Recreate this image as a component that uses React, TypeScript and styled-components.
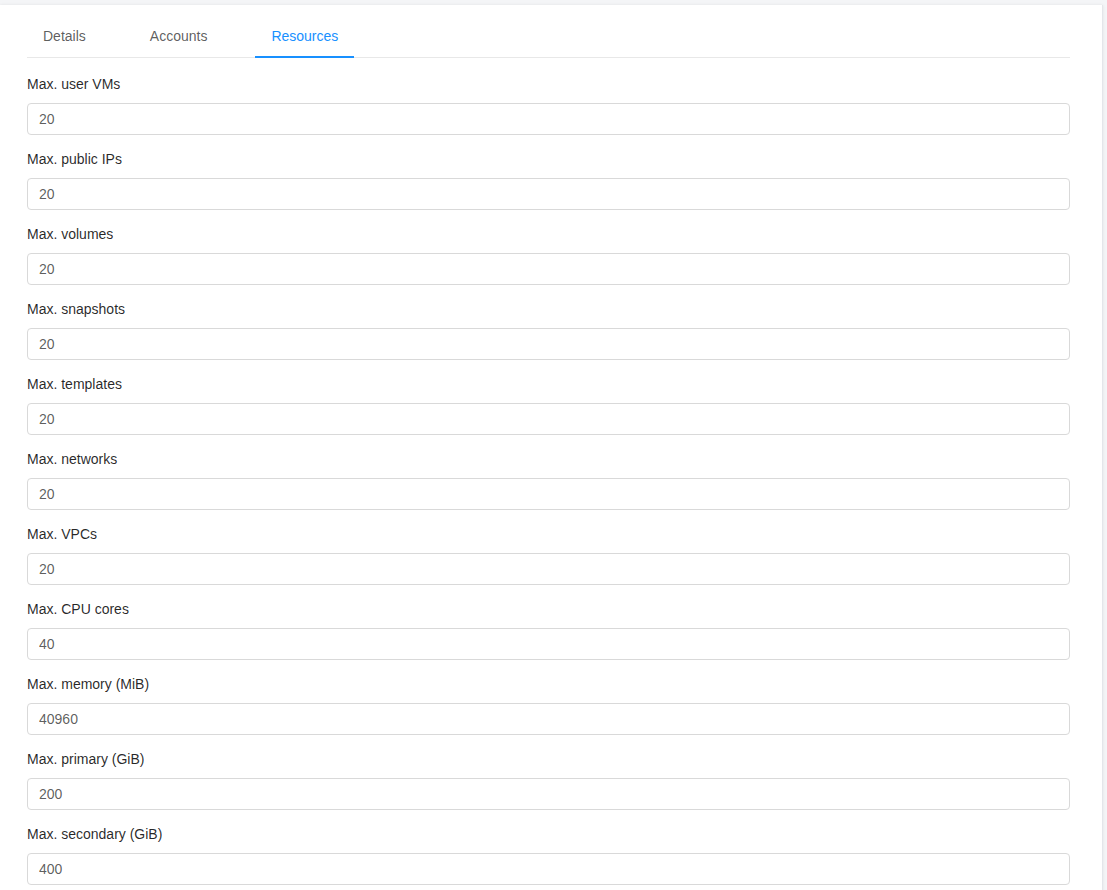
import * as React from "react";
import styled, { createGlobalStyle } from "styled-components";

const GlobalStyle = createGlobalStyle`
  html, body {
    margin: 0;
    padding: 0;
    background: #f4f5f7;
    font-family: "Liberation Sans", Arial, sans-serif;
    overflow: hidden;
  }
`;

const Card = styled.div`
  background: #ffffff;
  box-shadow: 0 0 3px rgba(0, 0, 0, 0.08);
  border-right: 1px solid #e4e6ea;
  margin-top: 5px;
  min-height: 1000px;
  padding: 8px 32px 0 27px;
  width: 1043px;
`;

const TabBar = styled.div`
  border-bottom: 1px solid #e8e8e8;
  display: flex;
  margin-bottom: 15px;
`;

const Tab = styled.div<{ $active?: boolean }>`
  color: ${(p) => (p.$active ? "#1890ff" : "rgba(0, 0, 0, 0.65)")};
  font-size: 14px;
  line-height: 21px;
  margin-right: 32px;
  padding: 13px 16px 10px;
  position: relative;

  &::after {
    background: #1890ff;
    bottom: -1px;
    content: "";
    display: ${(p) => (p.$active ? "block" : "none")};
    height: 2px;
    left: 0;
    position: absolute;
    right: 0;
  }
`;

const FormItem = styled.div`
  margin-bottom: 13px;
`;

const Label = styled.label`
  color: rgba(0, 0, 0, 0.85);
  display: block;
  font-size: 14px;
  line-height: 22px;
  padding-bottom: 8px;
`;

const Input = styled.input`
  border: 1px solid #d9d9d9;
  border-radius: 4px;
  box-sizing: border-box;
  color: rgba(0, 0, 0, 0.65);
  display: block;
  font-family: "Liberation Sans", Arial, sans-serif;
  font-size: 14px;
  height: 32px;
  line-height: 22px;
  outline: none;
  padding: 4px 11px;
  width: 100%;
`;

const fields: [string, string][] = [
  ["Max. user VMs", "20"],
  ["Max. public IPs", "20"],
  ["Max. volumes", "20"],
  ["Max. snapshots", "20"],
  ["Max. templates", "20"],
  ["Max. networks", "20"],
  ["Max. VPCs", "20"],
  ["Max. CPU cores", "40"],
  ["Max. memory (MiB)", "40960"],
  ["Max. primary (GiB)", "200"],
  ["Max. secondary (GiB)", "400"],
];

const App = () => {
  return (
    <>
      <GlobalStyle />
      <Card>
        <TabBar>
          <Tab>Details</Tab>
          <Tab>Accounts</Tab>
          <Tab $active>Resources</Tab>
        </TabBar>
        {fields.map(([label, value]) => (
          <FormItem key={label}>
            <Label>{label}</Label>
            <Input defaultValue={value} />
          </FormItem>
        ))}
      </Card>
    </>
  );
};

export default App;
